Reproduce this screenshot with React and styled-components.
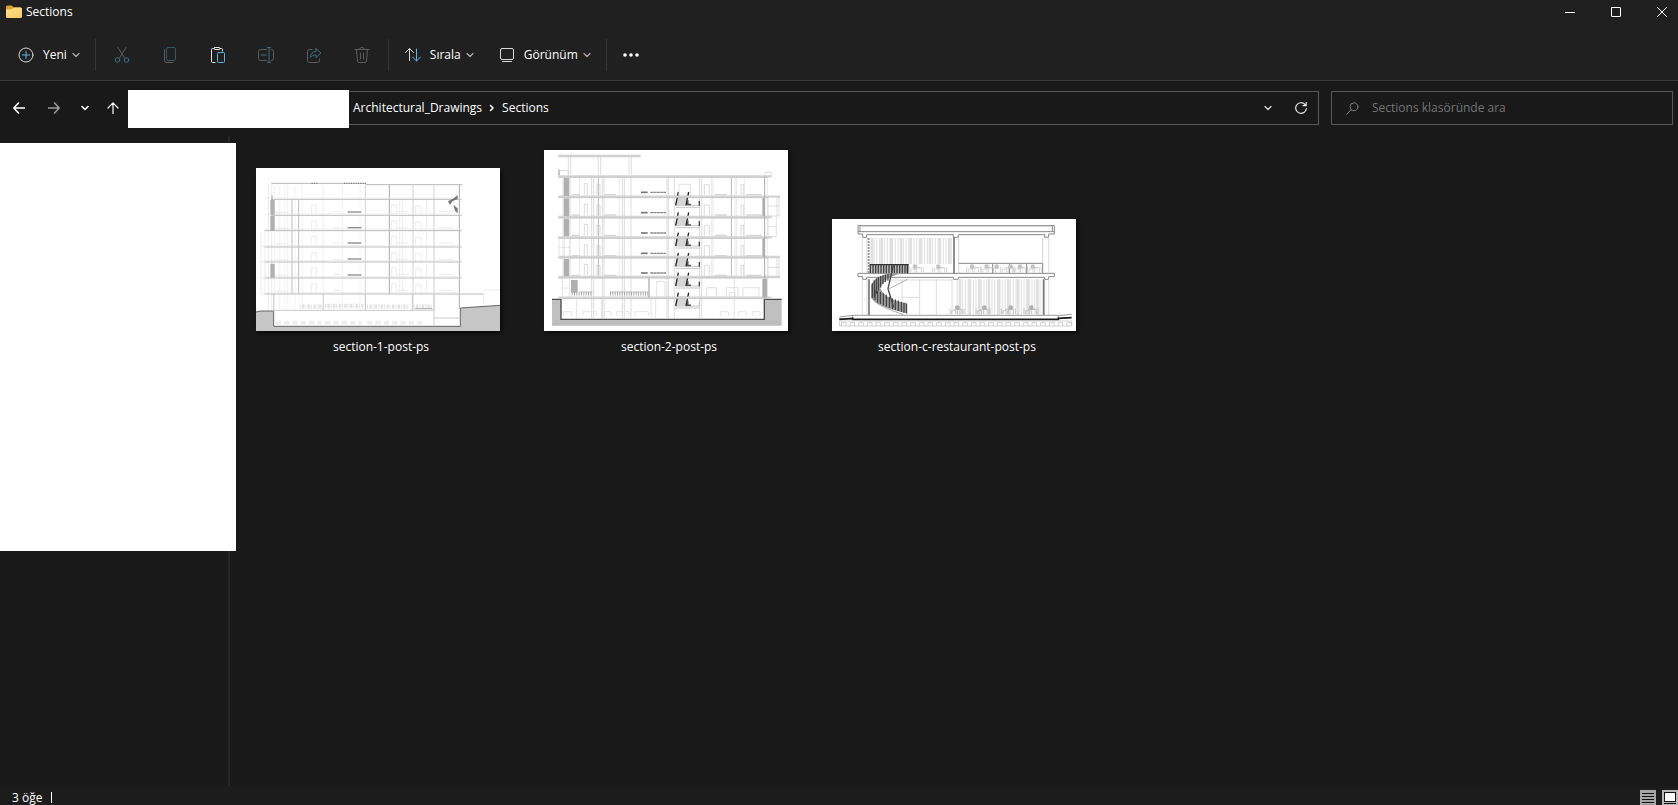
import React from 'react';
import styled, { createGlobalStyle } from 'styled-components';

const Global = createGlobalStyle`
  *, *::before, *::after { box-sizing: border-box; }
  body {
    margin: 0;
    background: #191919;
    color: #fff;
    font: 12px/16px "Open Sans", "Noto Sans", sans-serif;
  }
  button, input { font: inherit; color: inherit; }
`;

const Window = styled.div`
  display: flex;
  flex-direction: column;
  height: 100vh;
  overflow: hidden;
`;

const TitleBar = styled.header`
  display: flex;
  align-items: center;
  justify-content: space-between;
  flex: none;
  height: 24px;
  padding-left: 6px;
  background: #202020;
`;

const Title = styled.h1`
  display: flex;
  align-items: center;
  gap: 4px;
  margin: 0;
  font-size: 12px;
  font-weight: 400;
`;

const WindowControls = styled.div`
  display: flex;
  gap: 14px;
`;

const PlainButton = styled.button`
  display: flex;
  align-items: center;
  justify-content: center;
  flex: none;
  padding: 0;
  border: 0;
  background: none;
`;

const ControlButton = styled(PlainButton)`
  width: 32px;
  height: 22px;
`;

const Toolbar = styled.div`
  display: flex;
  align-items: center;
  flex: none;
  height: 57px;
  padding: 5px 8px 0;
  border-bottom: 1px solid #3a3a3a;
  background: #202020;
`;

const MenuButton = styled(PlainButton)`
  height: 32px;
  padding: 0 9px 0 10px;
  gap: 5px;
  font-weight: 500;
`;

const MenuLabel = styled.span`
  padding-left: 4px;
`;

const ButtonGroup = styled.div`
  display: flex;
  gap: ${(p) => p.$gap || 8}px;
`;

const IconButton = styled(PlainButton)`
  width: ${(p) => p.$width || 40}px;
  height: 32px;
`;

const Separator = styled.span`
  flex: none;
  width: 1px;
  height: 32px;
  margin: 0 6px;
  background: #363636;
`;

const NavRow = styled.nav`
  display: flex;
  flex: none;
  height: 55px;
  padding: 10px 5px 0 2px;
`;

const NavButton = styled(PlainButton)`
  width: ${(p) => p.$width}px;
  height: 34px;
`;

const AddressBar = styled.div`
  display: flex;
  align-items: center;
  flex: 1;
  min-width: 0;
  height: 34px;
  margin-right: 12px;
  padding-right: 1px;
  border: 1px solid #585858;
`;

const HiddenPath = styled.div`
  flex: none;
  align-self: flex-start;
  width: 221px;
  height: 38px;
  margin: -2px 4px 0 -1px;
  background: #fff;
`;

const Crumbs = styled.ol`
  display: flex;
  align-items: center;
  flex: 1;
  gap: 6px;
  margin: 0;
  padding: 0;
  list-style: none;

  li {
    display: flex;
    align-items: center;
    gap: 6px;
  }
  a {
    color: inherit;
    text-decoration: none;
  }
`;

const SearchBox = styled.label`
  display: flex;
  align-items: center;
  flex: none;
  gap: 13px;
  width: 342px;
  height: 34px;
  padding: 0 14px;
  border: 1px solid #585858;
`;

const SearchInput = styled.input`
  flex: 1;
  min-width: 0;
  padding: 0;
  border: 0;
  outline: 0;
  background: none;
  &::placeholder { color: #747474; opacity: 1; }
`;

const Main = styled.div`
  display: flex;
  flex: 1;
  min-height: 0;
`;

const Sidebar = styled.aside`
  flex: none;
  width: 230px;
  padding-top: 7px;
  border-right: 2px solid #272727;
`;

const HiddenTree = styled.div`
  height: 408px;
  margin-right: -8px;
  background: #fff;
`;

const Files = styled.ul`
  display: flex;
  flex: 1;
  flex-wrap: wrap;
  align-items: flex-end;
  align-content: flex-start;
  gap: 24px 44px;
  margin: 0;
  padding: 14px 26px;
  list-style: none;
`;

const FileLink = styled.a`
  display: flex;
  flex-direction: column;
  gap: 8px;
  width: 244px;
  color: inherit;
  text-align: center;
  text-decoration: none;

  svg {
    display: block;
    width: 100%;
    height: auto;
    background: #fff;
    box-shadow: 2px 2px 4px #0a0a0a;
  }
`;

const FileName = styled.span`
  padding-left: 6px;
`;

const StatusBar = styled.footer`
  display: flex;
  justify-content: space-between;
  flex: none;
  height: 18px;
  padding: 3px 0 0 12px;
  overflow: hidden;
  background: #1c1c1c;
`;

const Count = styled.span`
  display: flex;
  align-items: center;
  gap: 9px;
  &::after {
    content: "";
    width: 1px;
    height: 11px;
    background: #fff;
  }
`;

const ViewModes = styled.div`
  display: flex;
  gap: 6px;
`;

const ViewButton = styled(PlainButton)`
  width: 16px;
  height: 16px;
`;

const Icon = ({ w = 16, h = 16, stroke = '#d8d8d8', children, sw = 1 }) => (
  <svg
    width={w}
    height={h}
    viewBox={`0 0 ${w} ${h}`}
    fill="none"
    stroke={stroke}
    strokeWidth={sw}
    strokeLinecap="round"
    strokeLinejoin="round"
    aria-hidden="true"
  >
    {children}
  </svg>
);

const Chevron = ({ stroke = '#b0b0b0', sw = 1.2 }) => (
  <Icon w={8} h={8} stroke={stroke} sw={sw}>
    <path d="M1 2.500 4 5.500 7 2.500" />
  </Icon>
);

const FolderIcon = () => (
  <svg width="16" height="14" viewBox="0 0 16 14" aria-hidden="true">
    <defs>
      <linearGradient id="folder" x1="0" y1="0" x2="1" y2="1">
        <stop offset="0" stopColor="#ffe394" />
        <stop offset="1" stopColor="#f8ca5c" />
      </linearGradient>
    </defs>
    <path d="M0 2a1.500 1.500 0 0 1 1.500-1.500H5.500L8 2.500h6.500A1.500 1.500 0 0 1 16 4v7H0z" fill="#e2a02c" />
    <path d="M0 4.500h5.500L8 2.500h6.500A1.500 1.500 0 0 1 16 4v7.500a1.500 1.500 0 0 1-1.500 1.500h-13A1.500 1.500 0 0 1 0 11.500z" fill="url(#folder)" />
  </svg>
);

const DIM = '#5c5c5c';
const DIM_BLUE = '#345566';

const range = (n) => Array.from({ length: n }, (_, i) => i);
const vlines = (xs, y1, y2) => xs.map((x) => `M${x} ${y1}V${y2}`).join('');

function SectionOne() {
  const floors = [118, 166, 212, 261, 306, 354, 402];
  return (
    <svg viewBox="33 24 732 489" fill="none" role="img" aria-label="section-1-post-ps">
      <path d="M33 456 48 453H86V499H646V444L765 436V513H33z" fill="#c6c6c6" />
      <path d="M33 456 48 453H86V499H646V444L765 436" stroke="#666" strokeWidth="3" />
      <path d="M78 70H362M362 74H652" stroke="#b8b8b8" strokeWidth="3" />
      <path d="M200 70H220M297 70H365" stroke="#777" strokeWidth="4" strokeDasharray="3 4" />
      <path d={vlines([70, 80], 68, 450)} stroke="#e2e2e2" strokeWidth="2" />
      <path d={vlines([88, 104, 120, 128, 150, 172, 235, 293, 345], 76, 450)} stroke="#ebebeb" strokeWidth="2" />
      <path d={vlines([361, 504, 567], 74, 450)} stroke="#d2d2d2" strokeWidth="3" />
      <path d={vlines([141, 161], 118, 402)} stroke="#bbb" strokeWidth="3" />
      <path d="M433 74V402M643 74V446" stroke="#aaa" strokeWidth="3" />
      {floors.map((y, i) => (
        <g key={y}>
          <path d={`M${i > 1 ? 58 : 78} ${y}H650`} stroke="#bcbcbc" strokeWidth="3" />
          <path d={`M60 ${y - 4}H650`} stroke="#e6e6e6" strokeWidth="2" />
          {i < 6 && (
            <g stroke="#e4e4e4" strokeWidth="2">
              <path d={`M200 ${y + 44}V${y + 17}H214V${y + 44}M440 ${y + 44}V${y + 17}H454V${y + 44}M512 ${y + 44}V${y + 20}H528V${y + 44}M464 ${y + 4}V${y + 44}M473 ${y + 4}V${y + 44}M545 ${y + 4}V${y + 44}`} />
              <path d={`M90 ${y + 39}H126M265 ${y + 37}H290M455 ${y + 37}H490M582 ${y + 37}H625`} />
            </g>
          )}
        </g>
      ))}
      {[156, 203, 249, 297, 345].map((y) => (
        <path key={y} d={`M308 ${y}H349`} stroke="#8c8c8c" strokeWidth="4" />
      ))}
      <path d="M76 120H89V164H76zM76 168H89V212H76zM76 311H89V353H76z" fill="#b0b0b0" />
      <path d="M81 105V120" stroke="#888" strokeWidth="2" />
      <path d="M48 214V402M60 214V402M48 260H60M48 305H60M48 354H60M48 402H60" stroke="#e4e4e4" strokeWidth="2" />
      <path d="M609 124 626 115 638 105V117L622 124 615 135zM625 135 638 145V160L630 152z" fill="#777" />
      <path d="M650 402H716" stroke="#bbb" strokeWidth="3" />
      <path d="M716 402V438M716 390H765" stroke="#e4e4e4" strokeWidth="2" />
      <path d="M86 451H567M567 402V499M567 474H646M502 402V450M361 402V450M235 402V450M86 402V450" stroke="#ccc" strokeWidth="3" />
      <path d="M164 440H236M240 438H355M366 440H492M506 440H564" stroke="#e2e2e2" strokeWidth="13" strokeDasharray="3 4 7 3" />
      <path d="M92 488H230M240 488H350M366 488H535" stroke="#efefef" strokeWidth="12" strokeDasharray="16 9" />
      <path d="M510 446H562" stroke="#aaa" strokeWidth="3" />
    </svg>
  );
}

function SectionTwo() {
  const floors = [109, 170, 231, 292, 351, 411, 473];
  return (
    <svg viewBox="27 30 732 543" fill="none" role="img" aria-label="section-2-post-ps">
      <path d="M51 478H78V538H688V478H740V557H51z" fill="#c0c0c0" />
      <path d="M51 478H78V538H688V478H740" stroke="#4a4a4a" strokeWidth="4" />
      <path d="M60 545H732M55 552H735" stroke="#aaa" strokeDasharray="7 5" strokeWidth="2" />
      <path d="M70 48H317" stroke="#d0d0d0" strokeWidth="8" />
      <path d="M100 52V104M107 52V104M190 52V104M197 52V104M282 52V104M289 52V104" stroke="#ccc" strokeWidth="2" />
      <path d="M72 89V106" stroke="#888" strokeWidth="3" />
      <path d="M100 106V92H74M690 108V97H708V108" stroke="#ccc" strokeWidth="2" />
      <path d={vlines([170, 176, 202, 207, 262, 268, 288, 396, 400, 418, 494, 500], 112, 535)} stroke="#cbcbcb" strokeWidth="2" />
      <path d={vlines([84, 106, 134, 253, 530, 534, 600, 605, 628, 697], 112, 411)} stroke="#e0e0e0" strokeWidth="2" />
      <path d={vlines([190, 589], 112, 411)} stroke="#bbb" strokeWidth="3" />
      {floors.map((y, i) => (
        <g key={y}>
          <path d={`M70 ${y}H${i === 1 || i === 5 || i === 4 ? 735 : 710}`} stroke="#d4d4d4" strokeWidth="7" />
          <path d={`M70 ${y + 3}H700`} stroke="#bbb" strokeWidth="2" />
          {i < 5 && (
            <g>
              <path d={`M148 ${y + 56}V${y + 22}H157V${y + 56}M186 ${y + 56}V${y + 25}H195V${y + 56}M508 ${y + 56}V${y + 25}H523V${y + 56}M618 ${y + 56}V${y + 25}H626V${y + 56}`} stroke="#c8c8c8" strokeWidth="2" />
              <path d={`M110 ${y + 55}H134M208 ${y + 55}H244M540 ${y + 55}H575M634 ${y + 55}H680`} stroke="#d6d6d6" strokeWidth="4" />
              <path d={`M318 ${y + 48}H338`} stroke="#777" strokeWidth="5" />
              <path d={`M346 ${y + 48}H393`} stroke="#8a8a8a" strokeWidth="4" strokeDasharray="9 1" />
            </g>
          )}
          {i < 6 && (
            <g>
              <path d={`M428 ${y + 57}H456V${y + 89}H422z`} fill="#d6d6d6" />
              <path d={`M430 ${y + 47} 422 ${y + 87}M461 ${y + 47} 453 ${y + 87}`} stroke="#222" strokeWidth="4" />
              <path d={`M458 ${y + 71}V${y + 85}H468`} stroke="#555" strokeWidth="5" />
              <path d={`M468 ${y + 87}H492M493 ${y + 73}V${y + 89}M422 ${y + 93}H494`} stroke="#aaa" strokeWidth="2" />
              {i < 5 && <path d={`M493 ${y + 74}V${y + 88}`} stroke="#444" strokeWidth="4" />}
            </g>
          )}
        </g>
      ))}
      <path d="M86 114H103V168H86zM86 175H103V229H86zM86 236H103V289H86zM86 357H103V409H86zM108 420H128V458H108z" fill="#b0b0b0" />
      <path d="M682 174H690V228H682zM682 296H690V350H682zM682 417H697V472H682z" fill="#b0b0b0" />
      <path d="M689 110V478" stroke="#aaa" strokeWidth="3" />
      <path d="M699 170V228H732V170M699 198H732M726 170V228M699 231V290H724V231M699 260H724M699 352V411H732V352M699 382H732M726 352V411" stroke="#d0d0d0" strokeWidth="2" />
      <path d="M72 295V350H104V295M72 322H104M88 295V350M82 415V472M104 415V472M82 444H104" stroke="#d6d6d6" strokeWidth="2" />
      <path d="M110 461H170M225 461H340" stroke="#aaa" strokeWidth="11" strokeDasharray="3 4" />
      <path d="M135 456H172M225 456H340" stroke="#aaa" strokeWidth="2" />
      <path d="M342 415V473" stroke="#999" strokeWidth="3" />
      <path d="M432 170V133H466V170M365 472V424H390V472M515 470V443H544V470M574 470V443H609V470M583 470V458H600V470M624 470V443H672V470" stroke="#d2d2d2" strokeWidth="2" />
      <path d="M125 478V535M200 478V535M348 478V535M362 478V535M598 415V535" stroke="#d6d6d6" strokeWidth="2" />
      <path d="M85 528V515H110V528M144 528V515H184V528M208 528V515H228V528M245 528V515H282V528M300 528V515H340V528M556 528V515H580V528M610 528V515H632V528M652 528V515H675V528" stroke="#e6e6e6" strokeWidth="3" />
    </svg>
  );
}

function SectionRestaurant() {
  const table = (x, y) =>
    `M${x} ${y}V${y - 17}M${x + 5} ${y}V${y - 10}H${x + 17}V${y}M${x + 22} ${y}V${y - 14}H${x + 36}V${y}M${x + 42} ${y}V${y - 17}M${x + 12} ${y - 14}H${x + 32}`;
  return (
    <svg viewBox="36 27 732 336" fill="none" role="img" aria-label="section-c-restaurant-post-ps">
      <path d="M114 47H703V72H686V82H674V74H415V82H400V74H140V82H128V72H114zM120 47V65M697 47V65M114 65H703" stroke="#888" strokeWidth="3" />
      <path d="M120 50H697" stroke="#ccc" strokeWidth="2" />
      <path d="M114 190H703V200H686V208H674V202H415V208H400V202H140V208H128V200H114z" stroke="#888" strokeWidth="3" />
      <path d="M127 82V190M141 82V190M127 208V315M141 208V315M686 82V190M674 208V315M686 208V315" stroke="#ccc" strokeWidth="2" />
      <path d="M402 82V190M147 208V315M671 208V315" stroke="#777" strokeWidth="5" />
      <path d="M146 84V190" stroke="#999" strokeWidth="6" strokeDasharray="6 3" />
      <path d="M416 82V190M668 82V160" stroke="#bbb" strokeWidth="2" />
      <path d={vlines(range(31).map((i) => 154 + i * 8), 84, 162)} stroke="#d0d0d0" strokeWidth="2" />
      <path d={vlines(range(9).map((i) => 156 + i * 29), 84, 162)} stroke="#e0e0e0" strokeWidth="8" />
      <path d={vlines(range(33).map((i) => 412 + i * 8), 208, 314)} stroke="#d0d0d0" strokeWidth="2" />
      <path d={vlines(range(9).map((i) => 420 + i * 29), 208, 314)} stroke="#e0e0e0" strokeWidth="8" />
      <path d="M416 160H668M518 160V190M568 160V190M620 160V190M668 160V190" stroke="#888" strokeWidth="3" />
      <path d={[268, 338, 440, 484, 542, 580, 622].map((x) => table(x, 187)).join('')} stroke="#c4c4c4" strokeWidth="2" />
      <path d={[390, 468, 544, 612].map((x) => table(x, 312)).join('')} stroke="#b0b0b0" strokeWidth="2" />
      {[285, 355, 456, 500, 530, 572, 600, 638].map((x) => (
        <circle key={x} cx={x} cy="170" r="7" fill="#c4c4c4" />
      ))}
      {[412, 493, 572, 634].map((x) => (
        <circle key={x} cx={x} cy="293" r="7" fill="#b0b0b0" />
      ))}
      <path d="M246 208V314M299 208V314M349 208V314M396 208V314M246 262H299M154 210H396" stroke="#ccc" strokeWidth="2" />
      <path d="M149 164H266V190H149z" fill="#bbb" />
      <path d={vlines(range(15).map((i) => 151 + i * 8), 163, 190)} stroke="#444" strokeWidth="4" />
      <path d="M149 164H266M262 165V190" stroke="#333" strokeWidth="4" />
      <path d="M266 188C220 190 190 208 181 236C198 264 226 274 261 280V310C220 300 172 290 153 262V226C162 205 185 194 215 190z" fill="#999" />
      {[
        'M157 220V264', 'M163 211V262', 'M169 205V252', 'M175 201V242', 'M182 198V232', 'M189 196V222', 'M196 194V216', 'M204 192V212',
        'M165 240V270', 'M173 243V278', 'M181 246V282', 'M190 250V286', 'M199 254V290', 'M208 260V294', 'M217 265V297', 'M226 268V300', 'M235 271V303', 'M244 275V306', 'M252 278V309', 'M260 281V311',
      ].map((d) => (
        <path key={d} d={d} stroke="#333" strokeWidth="3" />
      ))}
      <path d="M220 166 204 236 221 292" stroke="#444" strokeWidth="4" />
      <path d="M262 208 204 238M153 262C172 290 210 298 250 314" stroke="#888" strokeWidth="2" />
      <path d="M98 316H715M58 321 98 316V327H58M755 313 715 317V327" stroke="#999" strokeWidth="3" />
      <path d="M58 328 98 325V328H715V325L755 323" stroke="#1c1c1c" strokeWidth="5" />
      <path d="M58 333H755V348H58z" stroke="#bbb" strokeWidth="2" />
      <path d={range(27).map((i) => `M${64 + i * 26} 348V338H${78 + i * 26}V348`).join('')} stroke="#bbb" strokeWidth="2" />
    </svg>
  );
}

const FILES = [
  { name: 'section-1-post-ps', Drawing: SectionOne },
  { name: 'section-2-post-ps', Drawing: SectionTwo },
  { name: 'section-c-restaurant-post-ps', Drawing: SectionRestaurant },
];

export default function App() {
  return (
    <Window>
      <Global />
      <TitleBar>
        <Title>
          <FolderIcon />
          Sections
        </Title>
        <WindowControls>
          <ControlButton aria-label="Simge durumuna küçült">
            <Icon w={10} h={10} stroke="#fff"><path d="M.5 5.500h9" /></Icon>
          </ControlButton>
          <ControlButton aria-label="Ekranı kapla">
            <Icon w={10} h={10} stroke="#fff"><rect x=".5" y=".5" width="9" height="9" rx=".5" /></Icon>
          </ControlButton>
          <ControlButton aria-label="Kapat">
            <Icon w={10} h={10} stroke="#fff"><path d="m.5.5 9 9m0-9-9 9" /></Icon>
          </ControlButton>
        </WindowControls>
      </TitleBar>

      <Toolbar>
        <MenuButton>
          <Icon>
            <circle cx="8" cy="8" r="7" />
            <path d="M8 4.500v7M4.500 8h7" stroke="#5fb2e6" />
          </Icon>
          <MenuLabel>Yeni</MenuLabel>
          <Chevron />
        </MenuButton>
        <Separator />
        <ButtonGroup>
          <IconButton aria-label="Kes" disabled>
            <Icon stroke={DIM}>
              <path d="M4 .5 10.500 11M12 .5 5.500 11" />
              <circle cx="3.500" cy="13" r="2.300" stroke="#3f6b80" />
              <circle cx="12.500" cy="13" r="2.300" stroke="#3f6b80" />
            </Icon>
          </IconButton>
          <IconButton aria-label="Kopyala" disabled>
            <Icon stroke={DIM_BLUE}>
              <rect x="4.500" y=".5" width="9" height="13" rx="1.500" />
              <path d="M2.500 2.500v11a2 2 0 0 0 2 2H11" stroke={DIM} />
            </Icon>
          </IconButton>
          <IconButton aria-label="Yapıştır">
            <Icon stroke="#e4e4e4">
              <path d="M5 15.500H2.500a1 1 0 0 1-1-1v-12a1 1 0 0 1 1-1H4M10 1.500h1.500a1 1 0 0 1 1 1V4" />
              <rect x="4" y=".5" width="6" height="2" rx="1" />
              <rect x="7.500" y="5.500" width="7" height="10" rx="1" stroke="#5fb2e6" />
            </Icon>
          </IconButton>
          <IconButton aria-label="Yeniden adlandır" disabled>
            <Icon stroke={DIM}>
              <path d="M8.500 2.500h-6a2 2 0 0 0-2 2v7a2 2 0 0 0 2 2h6M13 2.500h.5a2 2 0 0 1 2 2v7a2 2 0 0 1-2 2H13" />
              <path d="M3 8h5M11 .5v15M9.500.5h3M9.500 15.500h3" stroke="#3f6b80" />
            </Icon>
          </IconButton>
          <IconButton aria-label="Paylaş" disabled>
            <Icon stroke={DIM}>
              <path d="M6 2.500H3.500a2 2 0 0 0-2 2v9a2 2 0 0 0 2 2h8a2 2 0 0 0 2-2V12" />
              <path d="M10 1.500 15 6l-5 4.500V8C7.500 8 6 8.500 4.500 10.500 4.500 7 6.500 4.500 10 4.200z" stroke="#3f6b80" />
            </Icon>
          </IconButton>
          <IconButton aria-label="Sil" disabled>
            <Icon stroke={DIM}>
              <path d="M1 2.500h14M5.500 2.500C5.500 1.200 6.500.5 8 .5s2.500.7 2.500 2M2.500 2.500 3.500 14a1.500 1.500 0 0 0 1.500 1.500h6a1.500 1.500 0 0 0 1.500-1.500l1-11.500M6.500 6v6M9.500 6v6" />
            </Icon>
          </IconButton>
        </ButtonGroup>
        <Separator />
        <ButtonGroup $gap={6}>
          <MenuButton>
            <Icon>
              <path d="M4.500 13.500v-12M.5 5.500l4-4 4 4" />
              <path d="M11.500 2v12M7.500 10l4 4 4-4" stroke="#5fb2e6" />
            </Icon>
            <MenuLabel>Sırala</MenuLabel>
            <Chevron />
          </MenuButton>
          <MenuButton>
            <Icon>
              <rect x="1.500" y="1.500" width="13" height="11" rx="1.500" />
              <path d="M3.500 14.500h9" />
            </Icon>
            <MenuLabel>Görünüm</MenuLabel>
            <Chevron />
          </MenuButton>
        </ButtonGroup>
        <Separator />
        <IconButton $width={36} aria-label="Daha fazla">
          <Icon>
            <g fill="#fff" stroke="none">
              <circle cx="2" cy="8" r="1.800" />
              <circle cx="8" cy="8" r="1.800" />
              <circle cx="14" cy="8" r="1.800" />
            </g>
          </Icon>
        </IconButton>
      </Toolbar>

      <NavRow aria-label="Gezinti">
        <NavButton $width={34} aria-label="Geri">
          <Icon w={12} h={12} stroke="#fff" sw={1.6}><path d="M11.500 6H.8M5.500 1 .8 6l4.700 5" /></Icon>
        </NavButton>
        <NavButton $width={36} aria-label="İleri">
          <Icon w={12} h={12} stroke="#9a9a9a" sw={1.6}><path d="M.5 6h10.700M6.500 1l4.700 5-4.700 5" /></Icon>
        </NavButton>
        <NavButton $width={26} aria-label="Son konumlar">
          <Chevron stroke="#fff" sw={1.6} />
        </NavButton>
        <NavButton $width={30} aria-label="Yukarı">
          <Icon w={12} h={12} stroke="#fff" sw={1.2}><path d="M6 11.500V.8M1 6 6 .8 11 6" /></Icon>
        </NavButton>
        <AddressBar>
          <HiddenPath />
          <Crumbs>
            <li>
              <a href="#drawings">Architectural_Drawings</a>
              <Icon w={8} h={8} stroke="#fff" sw={1.6}><path d="M2.500 1.500 5 4 2.500 6.500" /></Icon>
            </li>
            <li>
              <a href="#sections">Sections</a>
            </li>
          </Crumbs>
          <NavButton $width={34} aria-label="Önceki konumlar">
            <Chevron stroke="#e0e0e0" />
          </NavButton>
          <NavButton $width={32} aria-label="Yenile">
            <Icon w={12} h={12} stroke="#e8e8e8" sw={1.2}>
              <path d="M11.300 6.500A5.300 5.300 0 1 1 9.700 2.200L11 3.500M11.200.5v3.200H8" />
            </Icon>
          </NavButton>
        </AddressBar>
        <SearchBox>
          <Icon w={13} h={13} stroke="#7c7c7c">
            <circle cx="8" cy="4.800" r="4" />
            <path d="M5 7.800.8 12.200" />
          </Icon>
          <SearchInput type="text" aria-label="Ara" placeholder="Sections klasöründe ara" />
        </SearchBox>
      </NavRow>

      <Main>
        <Sidebar>
          <HiddenTree />
        </Sidebar>
        <Files>
          {FILES.map(({ name, Drawing }) => (
            <li key={name}>
              <FileLink href={`#${name}`}>
                <Drawing />
                <FileName>{name}</FileName>
              </FileLink>
            </li>
          ))}
        </Files>
      </Main>

      <StatusBar>
        <Count>3 öğe</Count>
        <ViewModes>
          <ViewButton aria-label="Ayrıntılar">
            <svg width="16" height="16" aria-hidden="true">
              <rect width="16" height="16" fill="#a6a6a6" />
              <path d="M2 3.500h12M2 6.500h12M2 9.500h12M2 12.500h12" stroke="#111" />
            </svg>
          </ViewButton>
          <ViewButton aria-label="Büyük simgeler">
            <svg width="16" height="16" aria-hidden="true">
              <rect width="16" height="16" fill="#b8b8b8" />
              <rect x="2.500" y="2.500" width="11" height="9" fill="#fff" stroke="#111" />
              <path d="M2 13.500h12" stroke="#111" />
            </svg>
          </ViewButton>
        </ViewModes>
      </StatusBar>
    </Window>
  );
}
